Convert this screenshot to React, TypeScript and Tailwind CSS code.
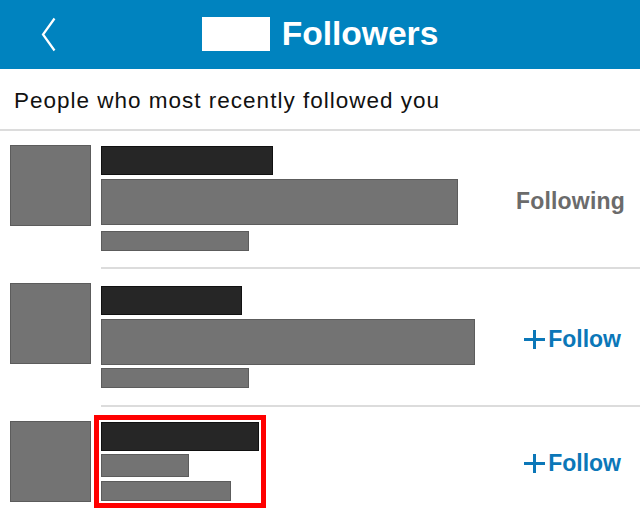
import React from "react";

type Person = {
  nameW: number;
  lines: { w: number; h: number; mt: number }[];
  following?: boolean;
  highlight?: boolean;
  pt: number;
};

const people: Person[] = [
  {
    nameW: 172,
    pt: 15,
    following: true,
    lines: [
      { w: 357, h: 46, mt: 4 },
      { w: 148, h: 20, mt: 6 },
    ],
  },
  {
    nameW: 141,
    pt: 17,
    lines: [
      { w: 374, h: 46, mt: 4 },
      { w: 148, h: 20, mt: 3 },
    ],
  },
  {
    nameW: 158,
    pt: 15,
    highlight: true,
    lines: [
      { w: 88, h: 23, mt: 3 },
      { w: 130, h: 20, mt: 4 },
    ],
  },
];

function Bars({ p }: { p: Person }) {
  const inner = (
    <div className="flex flex-col items-start">
      <div className="h-[29px] bg-[#262626] border border-[#111]" style={{ width: p.nameW }} />
      {p.lines.map((l, i) => (
        <div
          key={i}
          className="bg-[#737373] border border-[#5c5c5c]"
          style={{ width: l.w, height: l.h, marginTop: l.mt }}
        />
      ))}
    </div>
  );
  if (!p.highlight) return inner;
  return <div className="-m-[7px] border-[5px] border-[#ff0000] p-[2px]">{inner}</div>;
}

function Row({ p }: { p: Person }) {
  return (
    <div className="flex h-[138px] pl-[10px]">
      <div className="mt-[14px] h-[81px] w-[81px] shrink-0 bg-[#737373] border border-[#5c5c5c]" />
      <div className="ml-[10px] flex flex-1 flex-col border-b-2 border-[#dcdcdc]" style={{ paddingTop: p.pt }}>
        <div className="flex items-center justify-between">
          <Bars p={p} />
          {p.following ? (
            <div className="mr-[15px] mt-[6px] text-[23px] font-bold tracking-[0.2px] text-[#6b6b6b]">Following</div>
          ) : (
            <div className="mr-[19px] mt-[4px] flex items-center text-[#0b77b8]">
              <svg width="21" height="19" viewBox="0 0 21 19" className="mr-[3px]">
                <rect x="0" y="8" width="21" height="3" fill="currentColor" />
                <rect x="9" y="0" width="3" height="19" fill="currentColor" />
              </svg>
              <span className="text-[23px] font-bold">Follow</span>
            </div>
          )}
        </div>
      </div>
    </div>
  );
}

export default function App() {
  return (
    <div className="h-[518px] w-[640px] overflow-hidden bg-white font-['Liberation_Sans',Arial,sans-serif]">
      <div className="grid h-[69px] grid-cols-[1fr_auto_1fr] items-center bg-[#0083bf]">
        <div className="pl-[41px]">
          <svg width="15" height="35" viewBox="0 0 15 35">
            <path d="M13.5 1.5 L2 17.5 L13.5 33.5" fill="none" stroke="white" strokeWidth="2.2" />
          </svg>
        </div>
        <div className="flex items-center">
          <div className="h-[34px] w-[68px] bg-white" />
          <span className="ml-[12px] text-[33.6px] font-bold text-white">Followers</span>
        </div>
        <div />
      </div>
      <div className="flex h-[62px] items-center border-b-2 border-[#dcdcdc] pl-[14px] pt-[3px] text-[22.5px] tracking-[1px] text-[#111]">
        People who most recently followed you
      </div>
      {people.map((p, i) => (
        <Row key={i} p={p} />
      ))}
    </div>
  );
}
